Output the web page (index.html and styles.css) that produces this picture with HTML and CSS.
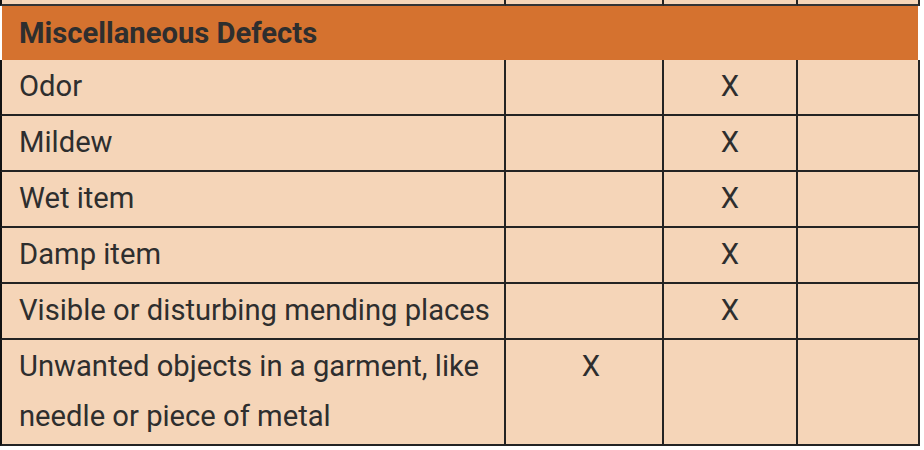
FILE: index.html
```html
<!DOCTYPE html>
<html lang="en">
<head>
<meta charset="utf-8">
<title>Miscellaneous Defects</title>
<link rel="stylesheet" href="styles.css">
</head>
<body>
<div class="defects" role="table">
  <div class="cell cell--first cell--strip"></div>
  <div class="cell cell--strip"></div>
  <div class="cell cell--strip"></div>
  <div class="cell cell--strip"></div>

  <div class="section" role="rowheader">Miscellaneous Defects</div>

  <div class="cell cell--first cell--label">Odor</div>
  <div class="cell cell--mark"></div>
  <div class="cell cell--mark">X</div>
  <div class="cell cell--mark"></div>

  <div class="cell cell--first cell--label">Mildew</div>
  <div class="cell cell--mark"></div>
  <div class="cell cell--mark">X</div>
  <div class="cell cell--mark"></div>

  <div class="cell cell--first cell--label">Wet item</div>
  <div class="cell cell--mark"></div>
  <div class="cell cell--mark">X</div>
  <div class="cell cell--mark"></div>

  <div class="cell cell--first cell--label">Damp item</div>
  <div class="cell cell--mark"></div>
  <div class="cell cell--mark">X</div>
  <div class="cell cell--mark"></div>

  <div class="cell cell--first cell--label">Visible or disturbing mending places</div>
  <div class="cell cell--mark"></div>
  <div class="cell cell--mark">X</div>
  <div class="cell cell--mark"></div>

  <div class="cell cell--first cell--label">Unwanted objects in a garment, like needle or piece of metal</div>
  <div class="cell cell--mark cell--shift">X</div>
  <div class="cell cell--mark"></div>
  <div class="cell cell--mark"></div>
</div>
</body>
</html>
```

FILE: styles.css
```css
html, body {
  margin: 0;
  padding: 0;
  background: #ffffff;
}

body {
  font-family: Roboto, "Liberation Sans", sans-serif;
  color: #2e2e2e;
  font-size: 29.2px;
}

.defects {
  display: grid;
  grid-template-columns: 506px 158px 134px 122px;
  width: 920px;
}

.cell {
  box-sizing: border-box;
  background: #f5d5b8;
  border-right: 2px solid #232323;
  border-bottom: 2px solid #232323;
  padding: 1px 6px 3px 17px;
  line-height: 50px;
}

.cell--first {
  border-left: 2px solid #111111;
}

.cell--strip {
  height: 6px;
  padding: 0;
  border-bottom-color: #333333;
}

.cell--label {
  text-align: left;
}

.cell--mark {
  text-align: center;
  padding-left: 4px;
  padding-right: 4px;
}

.cell--shift {
  padding-left: 18px;
}

.section {
  grid-column: 1 / -1;
  box-sizing: border-box;
  height: 54px;
  margin: 0 2px;
  background: #d5722f;
  font-weight: 700;
  line-height: 54px;
  padding: 0 17px;
  color: #2e2e2e;
}
```
